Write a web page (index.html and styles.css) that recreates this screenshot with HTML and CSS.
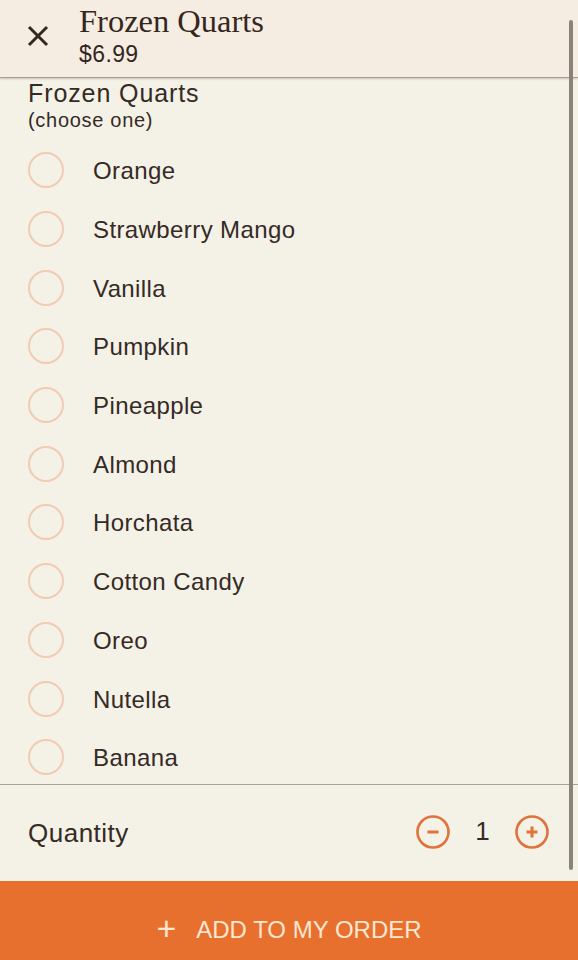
FILE: index.html
```html
<!DOCTYPE html>
<html lang="en">
<head>
    <meta charset="UTF-8">
    <meta name="viewport" content="width=device-width, initial-scale=1.0">
    <title>Frozen Quarts</title>
    <link rel="stylesheet" href="styles.css">
</head>
<body>
    <div class="sheet">
        <div class="header">
            <button class="close" aria-label="Close">
                <svg width="24" height="24" viewBox="0 0 24 24"><path d="M3 3 L21 21 M21 3 L3 21" stroke="#35261f" stroke-width="3" fill="none"/></svg>
            </button>
            <div class="header-text">
                <div class="item-name">Frozen Quarts</div>
                <div class="item-price">$6.99</div>
            </div>
        </div>

        <div class="options">
            <div class="group-title">Frozen Quarts</div>
            <div class="group-hint">(choose one)</div>
            <ul class="choice-list">
                <li class="choice"><span class="radio"></span>Orange</li>
                <li class="choice"><span class="radio"></span>Strawberry Mango</li>
                <li class="choice"><span class="radio"></span>Vanilla</li>
                <li class="choice"><span class="radio"></span>Pumpkin</li>
                <li class="choice"><span class="radio"></span>Pineapple</li>
                <li class="choice"><span class="radio"></span>Almond</li>
                <li class="choice"><span class="radio"></span>Horchata</li>
                <li class="choice"><span class="radio"></span>Cotton Candy</li>
                <li class="choice"><span class="radio"></span>Oreo</li>
                <li class="choice"><span class="radio"></span>Nutella</li>
                <li class="choice"><span class="radio"></span>Banana</li>
            </ul>
        </div>

        <div class="quantity">
            <span class="qty-label">Quantity</span>
            <div class="stepper">
                <button class="step" aria-label="Less">
                    <svg width="36" height="36" viewBox="0 0 36 36"><circle cx="18" cy="18" r="15.5" stroke="#e0733a" stroke-width="2.6" fill="none"/><path d="M12.5 18 H23.5" stroke="#e0733a" stroke-width="3"/></svg>
                </button>
                <span class="qty-value">1</span>
                <button class="step" aria-label="More">
                    <svg width="36" height="36" viewBox="0 0 36 36"><circle cx="18" cy="18" r="15.5" stroke="#e0733a" stroke-width="2.6" fill="none"/><path d="M12.5 18 H23.5 M18 12.5 V23.5" stroke="#e0733a" stroke-width="3"/></svg>
                </button>
            </div>
        </div>

        <button class="add-order"><span class="plus">+</span>ADD TO MY ORDER</button>

        <div class="scrollbar"></div>
    </div>
</body>
</html>
```

FILE: styles.css
```css
body { margin: 0; font-family: "Liberation Sans", Arial, sans-serif; color: #352a25; background: #f4f1e7; }
button { font-family: inherit; border: none; background: none; padding: 0; cursor: pointer; }
.sheet { position: relative; height: 960px; display: flex; flex-direction: column; overflow: hidden; }

.header { height: 77px; flex: none; display: flex; align-items: flex-start; background: #f6ede2; border-bottom: 1px solid #a59d94; box-shadow: 0 1px 2px rgba(80, 60, 40, 0.25); position: relative; z-index: 1; }
.close { width: 24px; height: 24px; margin: 24px 0 0 26px; }
.header-text { margin-left: 29px; padding-top: 3px; }
.item-name { font-family: "Liberation Serif", "Times New Roman", serif; font-size: 32.5px; line-height: 36px; color: #35261f; }
.item-price { font-size: 23px; line-height: 26px; margin-top: 2px; letter-spacing: 0.4px; color: #35261f; }

.options { flex: 1; overflow: hidden; padding-left: 28px; }
.group-title { font-size: 25px; line-height: 28px; margin-top: 1px; letter-spacing: 0.9px; }
.group-hint { font-size: 20px; line-height: 22px; margin-top: 2px; letter-spacing: 0.7px; }
.choice-list { list-style: none; margin: 10px 0 0; padding: 0; }
.choice { height: 58.7px; display: flex; align-items: center; font-size: 24px; letter-spacing: 0.4px; padding-top: 2px; box-sizing: border-box; }
.radio { width: 32px; height: 32px; border: 2px solid #f1cbb2; border-radius: 50%; margin-right: 29px; margin-top: -2px; flex: none; }

.quantity { height: 97px; flex: none; display: flex; align-items: center; justify-content: space-between; border-top: 1px solid #a8a29a; padding: 0 28px 0 28px; box-sizing: border-box; }
.qty-label { font-size: 26px; letter-spacing: 0.5px; }
.stepper { display: flex; align-items: center; margin-top: -3px; }
.step { width: 36px; height: 36px; display: block; }
.step svg { display: block; }
.qty-value { font-size: 26px; width: 63px; text-align: center; }

.add-order { height: 79px; flex: none; width: 100%; background: #e8702f; color: #fce6d0; font-size: 24px; display: flex; align-items: center; justify-content: center; padding-top: 18px; box-sizing: border-box; }
.plus { font-size: 34px; margin-right: 20px; margin-top: -3px; }

.scrollbar { position: absolute; left: 569px; top: 20px; width: 4px; height: 850px; background: #8a837b; border-radius: 2px; z-index: 2; }
```
